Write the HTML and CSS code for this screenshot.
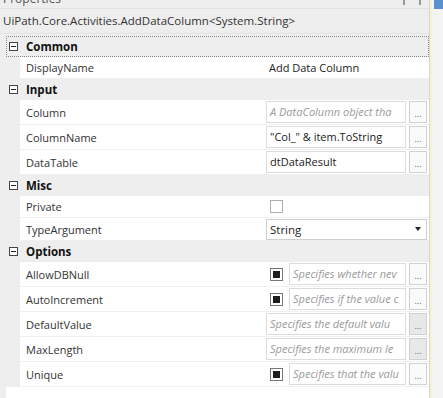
FILE: index.html
```html
<!DOCTYPE html>
<html lang="en">
<head>
    <meta charset="UTF-8">
    <title>Properties</title>
    <link rel="stylesheet" href="styles.css">
</head>
<body>
    <div class="window">
        <div class="panel">
            <div class="title">
                <span class="title-text">Properties</span>
                <span class="tools"><i></i><i></i></span>
            </div>
            <div class="typename">UiPath.Core.Activities.AddDataColumn&lt;System.String&gt;</div>

            <div class="grid">
                <div class="cat focus"><span class="toggle"></span>Common</div>
                <div class="prop">
                    <div class="name">DisplayName</div>
                    <div class="value"><span class="plain">Add Data Column</span></div>
                </div>

                <div class="cat"><span class="toggle"></span>Input</div>
                <div class="prop tall">
                    <div class="name">Column</div>
                    <div class="value">
                        <div class="box hint">A DataColumn object tha</div>
                        <div class="dots">...</div>
                    </div>
                </div>
                <div class="prop tall">
                    <div class="name">ColumnName</div>
                    <div class="value">
                        <div class="box">"Col_" &amp; item.ToString</div>
                        <div class="dots">...</div>
                    </div>
                </div>
                <div class="prop tall">
                    <div class="name">DataTable</div>
                    <div class="value">
                        <div class="box">dtDataResult</div>
                        <div class="dots">...</div>
                    </div>
                </div>

                <div class="cat"><span class="toggle"></span>Misc</div>
                <div class="prop">
                    <div class="name">Private</div>
                    <div class="value"><span class="check"></span></div>
                </div>
                <div class="prop combo-row">
                    <div class="name">TypeArgument</div>
                    <div class="value">
                        <div class="combo">String<span class="arrow"></span></div>
                    </div>
                </div>

                <div class="cat"><span class="toggle"></span>Options</div>
                <div class="prop tall">
                    <div class="name">AllowDBNull</div>
                    <div class="value">
                        <span class="check mixed"></span>
                        <div class="box hint">Specifies whether nev</div>
                        <div class="dots">...</div>
                    </div>
                </div>
                <div class="prop tall">
                    <div class="name">AutoIncrement</div>
                    <div class="value">
                        <span class="check mixed"></span>
                        <div class="box hint">Specifies if the value c</div>
                        <div class="dots">...</div>
                    </div>
                </div>
                <div class="prop tall">
                    <div class="name">DefaultValue</div>
                    <div class="value">
                        <div class="box hint">Specifies the default valu</div>
                        <div class="dots off">...</div>
                    </div>
                </div>
                <div class="prop tall">
                    <div class="name">MaxLength</div>
                    <div class="value">
                        <div class="box hint">Specifies the maximum le</div>
                        <div class="dots off">...</div>
                    </div>
                </div>
                <div class="prop tall">
                    <div class="name">Unique</div>
                    <div class="value">
                        <span class="check mixed"></span>
                        <div class="box hint">Specifies that the valu</div>
                        <div class="dots">...</div>
                    </div>
                </div>
            </div>
        </div>
        <div class="side"><span class="tab"></span></div>
    </div>
</body>
</html>
```

FILE: styles.css
```css
body {
    margin: 0;
    font-family: 'Open Sans', 'Noto Sans', Arial, sans-serif;
    font-size: 11px;
    color: #1e1e1e;
    background: #f0f0f0;
}

.window {
    display: flex;
    height: 398px;
    overflow: hidden;
}

.panel {
    width: 429px;
    border-right: 1px solid #d6d6d6;
    display: flex;
    flex-direction: column;
    background: #eeeeee;
}

.title {
    height: 8px;
    overflow: hidden;
    display: flex;
    align-items: flex-end;
    justify-content: space-between;
    padding: 0 6px 0 3px;
    border-bottom: 1px solid #e2e2e2;
}

.title-text {
    line-height: 18px;
    font-size: 12px;
    color: #555;
}

.tools {
    display: flex;
    gap: 14px;
    margin-bottom: 3px;
    margin-right: 2px;
}

.tools i {
    display: block;
    width: 2px;
    height: 5px;
    background: #9a9a9a;
}

.typename {
    height: 24px;
    line-height: 24px;
    padding-left: 3px;
    font-size: 11.5px;
    color: #333;
    border-bottom: 1px solid #e4e4e4;
    white-space: nowrap;
}

.grid {
    flex: 1;
    margin: 2px 0 0 6px;
    background: #ffffff;
}

.cat {
    height: 21px;
    display: flex;
    align-items: center;
    background: #eeeeee;
    font-weight: bold;
    font-size: 11.5px;
    color: #111;
}

.cat.focus {
    outline: 1px dotted #8a8a8a;
    outline-offset: -1px;
}

.toggle {
    position: relative;
    width: 7px;
    height: 7px;
    border: 1px solid #444;
    margin: 0 8px 0 3px;
    background: #fff;
}

.toggle::after {
    content: "";
    position: absolute;
    left: 1px;
    top: 3px;
    width: 5px;
    height: 1px;
    background: #222;
}

.prop {
    height: 22px;
    display: flex;
    border-left: 14px solid #eeeeee;
}

.prop.tall {
    height: 25px;
}

.prop.combo-row {
    height: 23px;
}

.name {
    width: 239px;
    flex-shrink: 0;
    padding-left: 6px;
    display: flex;
    align-items: center;
    border-bottom: 1px solid #f0f0f0;
    color: #333;
}

.value {
    flex: 1;
    display: flex;
    align-items: center;
    gap: 3px;
    padding: 0 2px 0 1px;
    border-bottom: 1px solid #f0f0f0;
    min-width: 0;
}

.plain {
    padding-left: 3px;
    color: #222;
}

.box {
    flex: 1;
    min-width: 0;
    height: 20px;
    line-height: 20px;
    border: 1px solid #dcdcdc;
    padding-left: 3px;
    white-space: nowrap;
    overflow: hidden;
    background: #fff;
    color: #222;
}

.box.hint {
    font-style: italic;
    color: #9a9a9a;
}

.dots {
    flex-shrink: 0;
    width: 16px;
    height: 20px;
    border: 1px solid #d0d0d0;
    background: #fafafa;
    color: #666;
    font-size: 9px;
    line-height: 24px;
    text-align: center;
}

.dots.off {
    background: #e8e8e8;
}

.check {
    flex-shrink: 0;
    width: 11px;
    height: 11px;
    border: 1px solid #adadad;
    margin-left: 4px;
    background: #fff;
    display: flex;
    align-items: center;
    justify-content: center;
}

.check.mixed {
    border-color: #777;
    margin-right: 3px;
}

.check.mixed::after {
    content: "";
    width: 7px;
    height: 7px;
    background: #1e1e1e;
}

.combo {
    flex: 1;
    height: 19px;
    border: 1px solid #cfcfcf;
    padding: 0 5px 0 3px;
    display: flex;
    align-items: center;
    justify-content: space-between;
    background: #fff;
    font-size: 11.5px;
}

.arrow {
    width: 0;
    height: 0;
    border-left: 3px solid transparent;
    border-right: 3px solid transparent;
    border-top: 4px solid #222;
}

.side {
    flex: 1;
    background: #f3f3f3;
    border-left: 2px solid #f7f1d8;
    padding-left: 2px;
}

.tab {
    display: block;
    height: 9px;
    background: #5a8fd0;
}
```
